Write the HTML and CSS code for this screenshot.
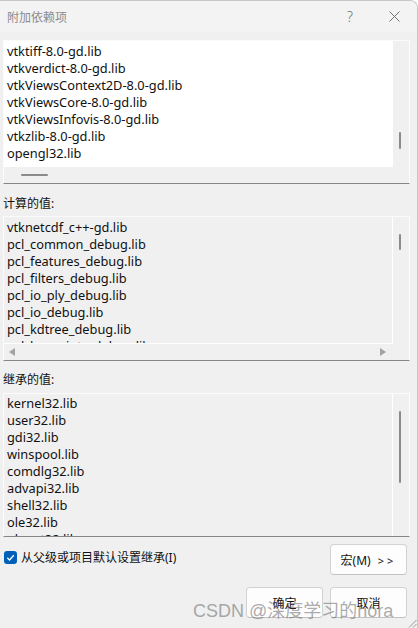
FILE: index.html
```html
<!DOCTYPE html>
<html>
<head>
  <meta charset="UTF-8">
  <title>附加依赖项</title>
  <link rel="stylesheet" href="styles.css">
</head>
<body>
  <div class="window">
    <div class="titlebar">
      <span class="title">附加依赖项</span>
      <span class="help">?</span>
      <span class="close">
        <svg width="11" height="11" viewBox="0 0 11 11"><path d="M0.5 0.5 L10.5 10.5 M10.5 0.5 L0.5 10.5" stroke="#6f6f6f" stroke-width="1" fill="none"/></svg>
      </span>
    </div>

    <div class="content">
      <div class="listbox box-edit">
        <div class="items">
          <div>vtktiff-8.0-gd.lib</div>
          <div>vtkverdict-8.0-gd.lib</div>
          <div>vtkViewsContext2D-8.0-gd.lib</div>
          <div>vtkViewsCore-8.0-gd.lib</div>
          <div>vtkViewsInfovis-8.0-gd.lib</div>
          <div>vtkzlib-8.0-gd.lib</div>
          <div>opengl32.lib</div>
        </div>
        <div class="vscroll"><span class="thumb"></span></div>
        <div class="hscroll"><span class="hthumb"></span></div>
        <div class="corner"></div>
      </div>

      <div class="label">计算的值:</div>

      <div class="listbox box-computed">
        <div class="items">
          <div>vtknetcdf_c++-gd.lib</div>
          <div>pcl_common_debug.lib</div>
          <div>pcl_features_debug.lib</div>
          <div>pcl_filters_debug.lib</div>
          <div>pcl_io_ply_debug.lib</div>
          <div>pcl_io_debug.lib</div>
          <div>pcl_kdtree_debug.lib</div>
          <div>pcl_keypoints_debug.lib</div>
        </div>
        <div class="vscroll"><span class="thumb"></span></div>
        <div class="hscroll arrows">
          <svg width="7" height="8" viewBox="0 0 7 8"><polygon points="6,0 6,8 0,4" fill="#a3a3a3"/></svg>
          <svg width="7" height="8" viewBox="0 0 7 8"><polygon points="1,0 1,8 7,4" fill="#a3a3a3"/></svg>
        </div>
        <div class="corner"></div>
      </div>

      <div class="label label-inherit">继承的值:</div>

      <div class="listbox box-inherit">
        <div class="items">
          <div>kernel32.lib</div>
          <div>user32.lib</div>
          <div>gdi32.lib</div>
          <div>winspool.lib</div>
          <div>comdlg32.lib</div>
          <div>advapi32.lib</div>
          <div>shell32.lib</div>
          <div>ole32.lib</div>
          <div>oleaut32.lib</div>
        </div>
        <div class="vscroll"><span class="thumb"></span></div>
      </div>

      <div class="option-row">
        <label class="check">
          <svg width="13" height="13" viewBox="0 0 13 13"><rect x="0" y="0" width="13" height="13" rx="3" fill="#005fb8"/><path d="M3.3 6.8 L5.5 9 L9.8 4.2" stroke="#fff" stroke-width="1.3" fill="none"/></svg>
          <span>从父级或项目默认设置继承(I)</span>
        </label>
        <button class="button">宏(M) <span class="chev">&gt;&gt;</span></button>
      </div>

      <div class="button-row">
        <button class="button">确定</button>
        <button class="button">取消</button>
      </div>
    </div>

    <div class="watermark">CSDN @深度学习的nora</div>
    <svg class="grip" width="9" height="9" viewBox="0 0 9 9"><path d="M8.5 1 L1 8.5 M8.5 5 L5 8.5" stroke="#9a9a9a" stroke-width="1" fill="none"/></svg>
  </div>
</body>
</html>
```

FILE: styles.css
```css
body {
  margin: 0;
  background-color: #fff;
  font-family: "Noto Sans", "Noto Sans CJK SC", sans-serif;
  font-size: 12.8px;
  color: #111;
}

.window {
  position: relative;
  box-sizing: border-box;
  width: 418px;
  height: 628px;
  background: #f0f0f0;
  border-top: 1px solid #c6c6c6;
  border-right: 1px solid #c6c6c6;
  border-top-right-radius: 8px;
  overflow: hidden;
}

.titlebar {
  display: flex;
  align-items: center;
  height: 31px;
  padding-left: 7px;
  background: #f3f3f3;
}

.title {
  font-family: "Noto Sans CJK SC", sans-serif;
  font-size: 12px;
  color: #8c8c8c;
}

.help {
  margin-left: auto;
  width: 20px;
  text-align: center;
  font-size: 14px;
  font-weight: 300;
  color: #6f6f6f;
}

.close {
  display: flex;
  align-items: center;
  justify-content: center;
  width: 45px;
  margin-left: 12px;
}

.content {
  padding: 8px 7px 0 3px;
}

.listbox {
  display: grid;
  grid-template-columns: 389px 16px;
  border: 1px solid #fbfbfb;
  border-bottom-color: #868686;
}

.items {
  box-sizing: border-box;
  padding: 2px 0 0 3px;
  line-height: 17px;
  white-space: nowrap;
  overflow: hidden;
  border-right: 1px solid #fff;
}

.vscroll {
  display: flex;
  flex-direction: column;
}

.thumb {
  width: 2px;
  margin-left: 6px;
  background: #8a8a8a;
  border-radius: 1px;
}

.hscroll {
  display: flex;
  align-items: center;
}

.hthumb {
  width: 27px;
  height: 2px;
  margin-left: 17px;
  background: #8a8a8a;
  border-radius: 1px;
}

.box-edit {
  grid-template-rows: 126px 16px;
}

.box-edit .items {
  background: #fff;
}

.box-edit .thumb {
  height: 17px;
  margin-top: 91px;
}

.box-computed {
  margin-top: 4px;
  grid-template-rows: 127px 16px;
}

.box-computed .items {
  border-bottom: 1px solid #fff;
}

.box-computed .thumb {
  height: 16px;
  margin-top: 17px;
}

.arrows {
  justify-content: space-between;
  padding: 0 7px 0 5px;
}

.box-inherit {
  margin-top: 5px;
  grid-template-rows: 142px;
}

.box-inherit .items {
  padding-top: 1px;
}

.box-inherit .thumb {
  height: 72px;
  margin-top: 17px;
}

.label {
  margin-top: 11px;
  font-size: 12px;
  line-height: 17px;
}

.label-inherit {
  margin-top: 10px;
}

.option-row {
  display: flex;
  align-items: flex-start;
  justify-content: space-between;
  margin-top: 7px;
  padding-right: 3px;
}

.check {
  display: flex;
  align-items: center;
  gap: 4px;
  margin-top: 4px;
  margin-left: 1px;
  font-size: 12px;
}

.check svg {
  flex: none;
}

.button {
  width: 77px;
  height: 31px;
  padding: 0;
  background: #fdfdfd;
  border: 1px solid #d2d2d2;
  border-bottom-color: #c2c2c2;
  border-radius: 4px;
  font-family: "Noto Sans", "Noto Sans CJK SC", sans-serif;
  font-size: 12px;
  color: #111;
}

.chev {
  margin-left: 4px;
  letter-spacing: 3px;
  font-size: 11px;
}

.button-row {
  display: flex;
  justify-content: flex-end;
  gap: 7px;
  margin-top: 12px;
  padding-right: 3px;
}

.watermark {
  position: absolute;
  left: 193px;
  top: 595px;
  font-family: "Liberation Sans", "Noto Sans CJK SC", sans-serif;
  font-size: 18px;
  color: rgba(100, 100, 100, 0.55);
  white-space: nowrap;
}

.grip {
  position: absolute;
  right: 0;
  bottom: 0;
}
```
